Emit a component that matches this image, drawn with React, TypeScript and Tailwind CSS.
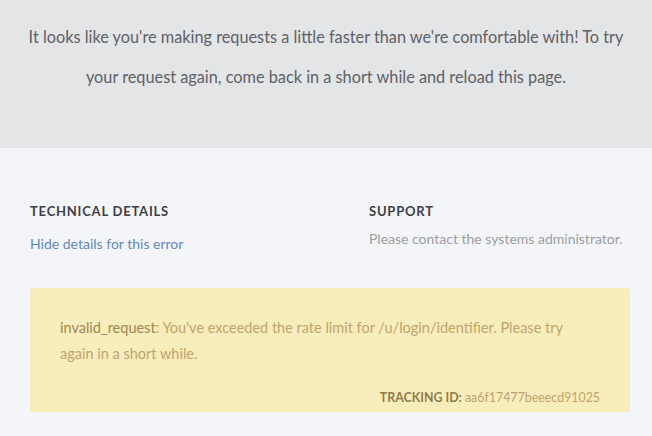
export default function App() {
  return (
    <div className="min-h-[436px] bg-[#f4f5f9] font-['Lato',_sans-serif]">
      {/* Top notice */}
      <div className="flex h-[148px] items-start justify-center bg-[#e4e5e7] px-[24px] pt-[17px]">
        <p className="text-center text-[16.3px] leading-[40px] text-[#5e6167]">
          It looks like you're making requests a little faster than we're comfortable with! To try your request again,
          come back in a short while and reload this page.
        </p>
      </div>

      <div className="pl-[30px] pr-[22px] pt-[55px]">
        <div className="flex">
          <div className="w-[339px]">
            <h3 className="text-[13px] font-bold leading-[16px] tracking-[0.06em] text-[#3e3f44]">TECHNICAL DETAILS</h3>
            <a className="mt-[15px] block text-[14px] leading-[20px] text-[#6189bd]">Hide details for this error</a>
          </div>
          <div className="flex-1">
            <h3 className="text-[13px] font-bold leading-[16px] tracking-[0.06em] text-[#3e3f44]">SUPPORT</h3>
            <p className="mt-[10px] whitespace-nowrap text-[14px] leading-[20px] text-[#9c9da1]">
              Please contact the systems administrator.
            </p>
          </div>
        </div>

        <div className="mt-[34px] rounded-[3px] bg-[#f7eebc] px-[30px] pb-[3px] pt-[27px]">
          <p className="max-w-[525px] text-[14.5px] leading-[26px] text-[#c2a36a]">
            <span className="text-[#a08650]">invalid_request</span>: You've exceeded the rate limit for
            /u/login/identifier. Please try again in a short while.
          </p>
          <p className="mt-[20px] text-right text-[12.4px] leading-[22px] text-[#c2a36a]">
            <span className="font-bold text-[#8f7a4a]">TRACKING ID:</span> aa6f17477beeecd91025
          </p>
        </div>
      </div>
    </div>
  );
}
